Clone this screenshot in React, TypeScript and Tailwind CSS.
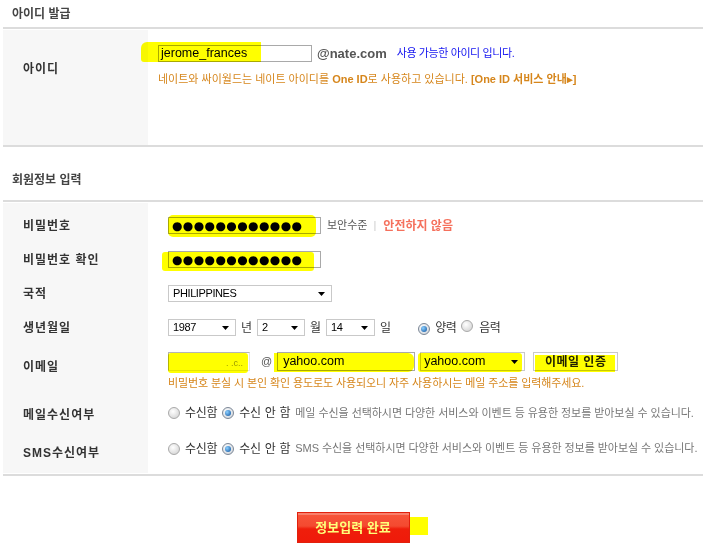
import React from "react";

function Arrow() {
  return (
    <svg width="7" height="4" viewBox="0 0 7 4" className="shrink-0">
      <polygon points="0,0 7,0 3.5,4" fill="#000" />
    </svg>
  );
}

function Select({ value, className }: { value: string; className: string }) {
  return (
    <div
      className={`flex h-[17px] items-center justify-between border border-[#c9c9c9] bg-white pl-[4px] pr-[6px] text-[11px] tracking-[-0.4px] text-black ${className}`}
    >
      <span>{value}</span>
      <Arrow />
    </div>
  );
}

function Radio({ checked }: { checked?: boolean }) {
  return (
    <span
      className={`inline-flex h-[12px] w-[12px] shrink-0 items-center justify-center rounded-full border ${
        checked
          ? "border-[#7c8796] bg-[radial-gradient(circle_at_40%_35%,#ffffff,#c7ced6)]"
          : "border-[#a9a9a9] bg-[radial-gradient(circle_at_40%_35%,#ffffff,#cdcdcd)]"
      }`}
    >
      {checked && (
        <span className="h-[6px] w-[6px] rounded-full bg-[radial-gradient(circle_at_35%_35%,#8cd0ff,#0b4f9c)]" />
      )}
    </span>
  );
}

function Mark({ className }: { className: string }) {
  return <div className={`pointer-events-none absolute bg-[#ffff00] mix-blend-multiply ${className}`} />;
}

function Label({ children, className = "" }: { children: React.ReactNode; className?: string }) {
  return (
    <div className={`flex w-[145px] shrink-0 bg-[#f7f7f7] pl-[20px] text-[12px] font-bold tracking-[1px] text-[#333] ${className}`}>
      {children}
    </div>
  );
}

function Dots() {
  return (
    <div className="flex h-[17px] w-[153px] items-center border border-[#a9a9a9] bg-white pl-[3px] font-['DejaVu_Sans',sans-serif] text-[12px] leading-none tracking-[0.4px] text-black">
      ●●●●●●●●●●●●
    </div>
  );
}

function ReceiveRow({ kind, last }: { kind: string; last?: boolean }) {
  return (
    <div className={`flex items-center gap-[5px] text-[12px] text-[#333] ${last ? "pb-[8px]" : "pb-[2px]"}`}>
      <Radio />
      <span className="tracking-[-0.3px]">수신함</span>
      <Radio checked />
      <span className="tracking-[-0.3px] [word-spacing:1px]">수신 안 함</span>
      <span className="text-[11px] tracking-[-0.05px] text-[#777]">
        {kind} 수신을 선택하시면 다양한 서비스와 이벤트 등 유용한 정보를 받아보실 수 있습니다.
      </span>
    </div>
  );
}

export default function App() {
  return (
    <div className="relative min-h-[556px] w-[725px] bg-white font-['Liberation_Sans','Noto_Sans_CJK_KR',sans-serif] text-[#333]">
      <div className="ml-[3px] w-[700px]">
        {/* 아이디 발급 */}
        <h2 className="flex h-[27px] items-center pl-[9px] text-[12px] font-bold text-[#444]">아이디 발급</h2>
        <div className="h-[2px] bg-[#dcdcdc]" />
        <div className="mt-[1px] flex h-[115px]">
          <Label className="pt-[30px]">아이디</Label>
          <div className="pl-[10px] pt-[15px]">
            <div className="flex h-[17px] items-center">
              <div className="flex h-[17px] w-[154px] items-center border border-[#a9a9a9] bg-white pl-[2px] text-[12.5px] text-black">
                jerome_frances
              </div>
              <span className="ml-[5px] text-[13px] font-bold text-[#555]">@nate.com</span>
              <span className="ml-[10px] text-[11px] tracking-[-0.4px] text-[#1414f0]">사용 가능한 아이디 입니다.</span>
            </div>
            <p className="mt-[10px] text-[11px] leading-[14px] tracking-[0px] text-[#d6861c]">
              네이트와 싸이월드는 네이트 아이디를 <b>One ID</b>로 사용하고 있습니다.{" "}
              <b>[One ID 서비스 안내▸]</b>
            </p>
          </div>
        </div>
        <div className="h-[2px] bg-[#dcdcdc]" />

        {/* 회원정보 입력 */}
        <h2 className="flex h-[53px] items-end pb-[11px] pl-[9px] text-[12px] font-bold text-[#444]">회원정보 입력</h2>
        <div className="h-[2px] bg-[#dcdcdc]" />
        <div className="mt-[1px] flex flex-col">
          <div className="flex h-[45px]">
            <Label className="items-center">비밀번호</Label>
            <div className="flex items-center pl-[20px]">
              <Dots />
              <span className="ml-[6px] text-[11px] text-[#555]">보안수준</span>
              <span className="ml-[6px] text-[11px] text-[#ccc]">|</span>
              <span className="ml-[7px] text-[12px] font-bold text-[#f5705c]">안전하지 않음</span>
            </div>
          </div>
          <div className="flex h-[23px]">
            <Label className="items-center">비밀번호 확인</Label>
            <div className="flex items-center pl-[20px]">
              <Dots />
            </div>
          </div>
          <div className="flex h-[45px]">
            <Label className="items-center">국적</Label>
            <div className="flex items-center pl-[20px]">
              <Select value="PHILIPPINES" className="w-[164px]" />
            </div>
          </div>
          <div className="flex h-[23px]">
            <Label className="items-center">생년월일</Label>
            <div className="flex items-center pl-[20px] text-[12px] text-[#333]">
              <Select value="1987" className="w-[68px]" />
              <span className="ml-[5px]">년</span>
              <Select value="2" className="ml-[5px] w-[48px]" />
              <span className="ml-[5px]">월</span>
              <Select value="14" className="ml-[5px] w-[49px]" />
              <span className="ml-[5px]">일</span>
              <span className="ml-[27px]"><Radio checked /></span>
              <span className="ml-[5px] tracking-[-0.5px]">양력</span>
              <span className="ml-[5px]"><Radio /></span>
              <span className="ml-[6px] tracking-[-0.5px]">음력</span>
            </div>
          </div>
          <div className="flex h-[57px]">
            <Label className="items-start pt-[19px]">이메일</Label>
            <div className="flex flex-col pl-[20px] pt-[13px]">
              <div className="flex h-[19px] items-center">
                <div className="flex h-[19px] w-[82px] items-end justify-end border border-[#b5b5b5] border-b-[#e5e5e5] border-r-[#e5e5e5] bg-white pr-[6px] text-[9px] leading-[14px] text-[#999]">
                  . .c..
                </div>
                <span className="ml-[11px] text-[11px] text-[#555]">@</span>
                <div className="ml-[5px] flex h-[19px] w-[138px] items-center border border-[#a9a9a9] bg-white pl-[5px] text-[12.5px] text-black">
                  yahoo.com
                </div>
                <div className="ml-[5px] flex h-[19px] w-[105px] items-center justify-between border border-[#c9c9c9] bg-white pl-[3px] pr-[6px] text-[12.5px] text-black">
                  <span>yahoo.com</span>
                  <Arrow />
                </div>
                <div className="ml-[8px] flex h-[19px] w-[85px] items-center justify-center border border-[#c9c9c9] bg-white text-[12px] font-bold tracking-[0.5px] text-[#222]">
                  이메일 인증
                </div>
              </div>
              <p className="mt-[5px] text-[11px] leading-[14px] tracking-[-0.1px] text-[#d6861c]">
                비밀번호 분실 시 본인 확인 용도로도 사용되오니 자주 사용하시는 메일 주소를 입력해주세요.
              </p>
            </div>
          </div>
          <div className="flex h-[36px]">
            <Label className="items-center pt-[2px]">메일수신여부</Label>
            <div className="flex items-center pl-[20px]">
              <ReceiveRow kind="메일" />
            </div>
          </div>
          <div className="flex h-[41px]">
            <Label className="items-center">SMS수신여부</Label>
            <div className="flex items-center pl-[20px]">
              <ReceiveRow kind="SMS" last />
            </div>
          </div>
        </div>
        <div className="mt-[1px] h-[2px] bg-[#dcdcdc]" />

        <div className="flex justify-center pt-[36px]">
          <button className="flex h-[31px] w-[113px] items-center justify-center border border-[#e2200c] bg-[linear-gradient(#f7553a_0%,#f44a30_45%,#ef1e0b_55%,#ef1a0a_100%)] text-[13px] font-bold text-[#ffff7a] shadow-[inset_0_2px_0_rgba(255,255,255,0.25)]">
            정보입력 완료
          </button>
        </div>
      </div>

      {/* marker highlights */}
      <Mark className="left-[141px] top-[42px] h-[20px] w-[120px] rounded-tl-[6px] rounded-bl-[3px]" />
      <Mark className="left-[168px] top-[215px] h-[22px] w-[148px] rounded-[5px]" />
      <Mark className="left-[162px] top-[252px] h-[19px] w-[152px] rounded-[3px]" />
      <Mark className="left-[168px] top-[353px] h-[20px] w-[80px] rounded-[3px]" />
      <Mark className="left-[274px] top-[353px] h-[19px] w-[140px] rounded-r-[6px]" />
      <Mark className="left-[418px] top-[353px] h-[19px] w-[104px] rounded-[3px]" />
      <Mark className="left-[535px] top-[355px] h-[17px] w-[80px]" />
      <Mark className="left-[410px] top-[517px] h-[18px] w-[18px]" />
    </div>
  );
}
